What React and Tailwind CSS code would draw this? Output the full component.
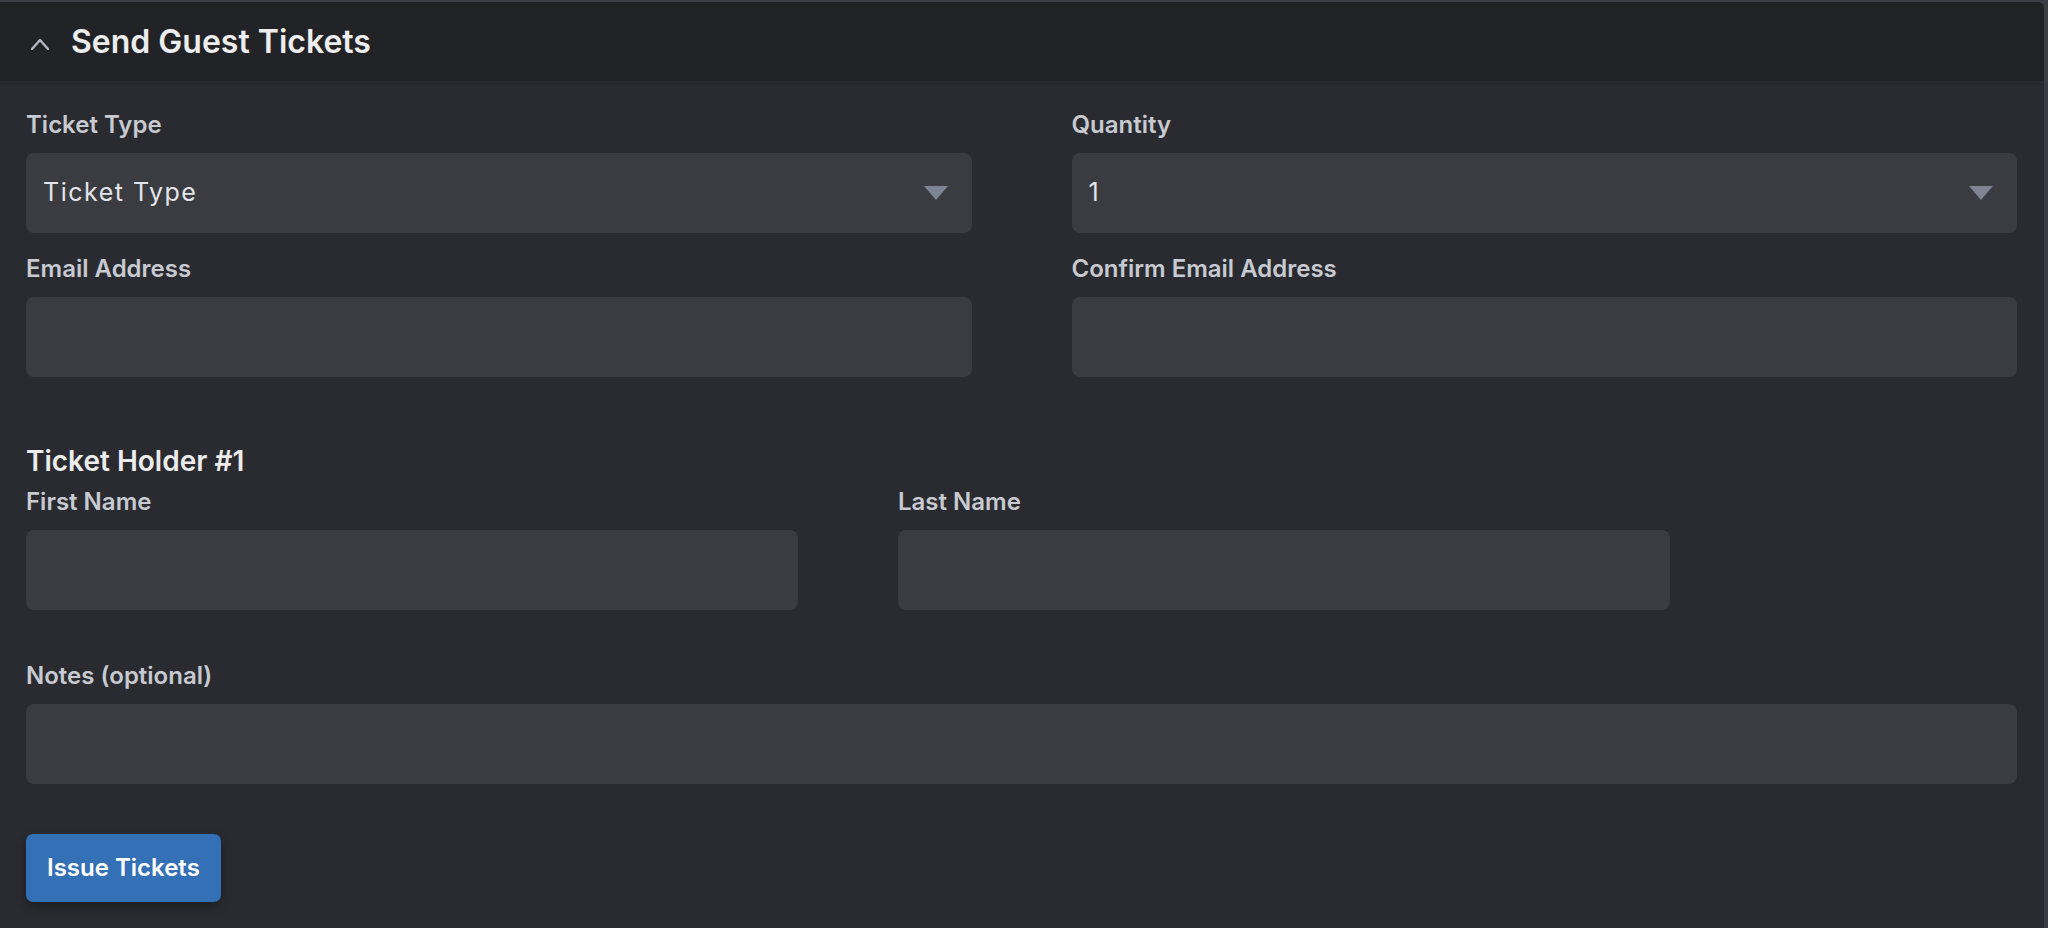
import React from 'react';

const font = { fontFamily: 'Inter, "Noto Sans", sans-serif' };

function Label({ children }) {
  return (
    <label className="block h-[36px] text-[24px] leading-[36px] font-semibold text-[#c7cad0]">
      {children}
    </label>
  );
}

function Caret() {
  return (
    <svg width="24" height="14" viewBox="0 0 24 14" className="shrink-0">
      <path d="M0 0 H24 L12 14 Z" fill="#7e8493" />
    </svg>
  );
}

function SelectBox({ value }) {
  return (
    <div className="mt-[10px] h-[80px] rounded-[8px] bg-[#3a3c42] flex items-center justify-between pl-[17px] pr-[24px]">
      <span className="text-[25px] tracking-[1.5px] text-[#e4e5e8]">{value}</span>
      <Caret />
    </div>
  );
}

function InputBox() {
  return <div className="mt-[10px] h-[80px] rounded-[8px] bg-[#3a3c42]" />;
}

export default function App() {
  return (
    <div className="w-[2048px] h-[928px] bg-[#3a3d44] pt-[2px] pr-[4px] overflow-hidden" style={font}>
      <div className="h-full bg-[#2a2b30] rounded-tr-[6px] overflow-hidden">
        {/* Header */}
        <div className="h-[79px] bg-[#222327] flex items-center pl-[31px]">
          <svg width="18" height="12" viewBox="0 0 18 12" className="mt-[4px]">
            <polyline points="1,11 9,2 17,11" fill="none" stroke="#b4b7bd" strokeWidth="2.4" strokeLinecap="round" strokeLinejoin="round" />
          </svg>
          <h2 className="ml-[22px] text-[32px] font-semibold text-[#ededee]">Send Guest Tickets</h2>
        </div>

        {/* Body */}
        <div className="pl-[26px] pr-[27px] pt-[26px] pb-[26px]">
          <div className="grid grid-cols-2 gap-x-[100px] gap-y-[18px]">
            <div>
              <Label>Ticket Type</Label>
              <SelectBox value="Ticket Type" />
            </div>
            <div>
              <Label>Quantity</Label>
              <SelectBox value="1" />
            </div>
            <div>
              <Label>Email Address</Label>
              <InputBox />
            </div>
            <div>
              <Label>Confirm Email Address</Label>
              <InputBox />
            </div>
          </div>

          <h3 className="mt-[64px] h-[40px] text-[28px] leading-[40px] font-semibold text-[#ececed]">Ticket Holder #1</h3>
          <div className="mt-[3px] grid grid-cols-[772px_772px] gap-x-[100px]">
            <div>
              <Label>First Name</Label>
              <InputBox />
            </div>
            <div>
              <Label>Last Name</Label>
              <InputBox />
            </div>
          </div>

          <div className="mt-[48px]">
            <Label>Notes (optional)</Label>
            <InputBox />
          </div>

          <button className="mt-[50px] h-[68px] px-[21px] rounded-[7px] bg-[#3470b5] text-white text-[24px] font-semibold shadow-[0_4px_10px_rgba(0,0,0,0.35)]">
            Issue Tickets
          </button>
        </div>
      </div>
    </div>
  );
}
